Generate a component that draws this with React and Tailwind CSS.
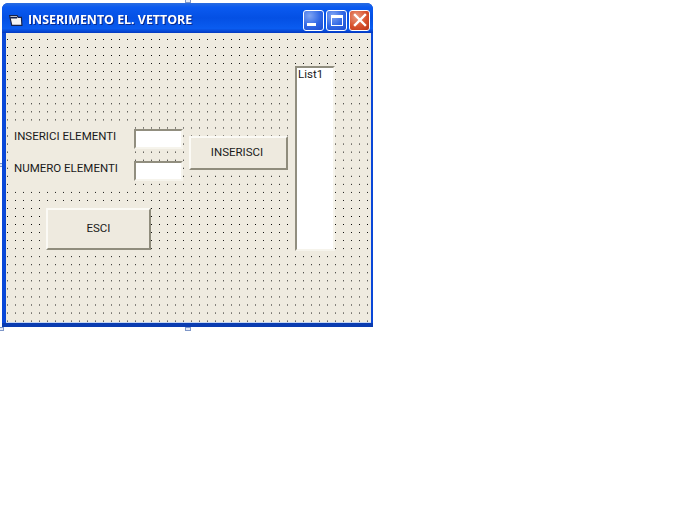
function Handle({ className }) {
  return <div className={`absolute w-[6px] h-[4px] bg-[#e4eaf6] border border-[#7f97c8] ${className}`} />;
}

function TitleBtn({ red, children }) {
  return (
    <div
      className={`w-[21px] h-[21px] rounded-[3px] border border-white flex items-center justify-center ${
        red
          ? "bg-[radial-gradient(circle_at_35%_30%,#ea9c82,#d8512c_55%,#b8341a)]"
          : "bg-[radial-gradient(circle_at_30%_25%,#7fa4f4,#2f66e4_55%,#1c4cd0)]"
      }`}
    >
      {children}
    </div>
  );
}

function Sunken({ className, children }) {
  return (
    <div className={`bg-white border-2 border-t-[#918e7f] border-l-[#918e7f] border-r-[#f6f4ec] border-b-[#f6f4ec] ${className}`}>
      {children}
    </div>
  );
}

function Btn({ className, children }) {
  return (
    <div className={`flex items-center justify-center bg-[#eeeadf] border-t-2 border-l-2 border-r-[2px] border-b-[2px] border-t-[#fbfaf5] border-l-[#fbfaf5] border-r-[#8f8c7c] border-b-[#8f8c7c] ${className}`}>
      {children}
    </div>
  );
}

export default function App() {
  return (
    <div className="relative w-[700px] h-[525px] bg-white overflow-hidden font-['Roboto',sans-serif]">
      <Handle className="left-[185px] top-[-1px]" />
      <Handle className="left-[-1px] top-[163px]" />
      <Handle className="left-[185px] top-[327px]" />
      <Handle className="left-[-2px] top-[327px]" />
      <div className="absolute left-[2px] top-[3px] w-[371px] h-[324px] flex flex-col rounded-t-[6px] overflow-hidden bg-[#0a48d8] shadow-[inset_0_-4px_0_#0a3cb0]">
        <div className="h-[30px] shrink-0 flex items-center pt-[4px] pl-[6px] pr-[3px] bg-[linear-gradient(180deg,#2a6ce0_0%,#0a5af0_14%,#0450e4_50%,#0a5cf0_85%,#0438c0_100%)]">
          <svg width="15" height="15" viewBox="0 0 14 14" className="shrink-0">
            <path d="M1.5 2.5h7l1 1.5h3l.5 7.5H3.5z" fill="#f4f4f4" stroke="#16224a" strokeWidth="1.1" />
            <path d="M2 4.5h6.5" stroke="#16224a" strokeWidth="1.4" />
          </svg>
          <span className="ml-[5px] text-white text-[12.4px] font-bold whitespace-nowrap font-['Open_Sans',sans-serif] drop-shadow-[1px_1px_0_#0a2a90]">
            INSERIMENTO EL. VETTORE
          </span>
          <div className="ml-auto flex gap-[2px]">
            <TitleBtn>
              <div className="w-[9px] h-[3px] bg-white mt-[9px] mr-[5px]" />
            </TitleBtn>
            <TitleBtn>
              <div className="w-[12px] h-[11px] border border-white border-t-[3px]" />
            </TitleBtn>
            <TitleBtn red>
              <svg width="14" height="14" viewBox="0 0 14 14">
                <path d="M2 2l10 10M12 2L2 12" stroke="#fff" strokeWidth="2.4" strokeLinecap="square" />
              </svg>
            </TitleBtn>
          </div>
        </div>
        <div className="ml-[4px] mr-[2px] mb-[4px] flex-1 flex items-start pl-[6px] pt-[33px] bg-[#efebe0] bg-[radial-gradient(circle_at_0.5px_0.5px,#000_0.5px,transparent_0.5px)] bg-[size:8px_8.06px] bg-[position:1px_6px] border-b border-b-[#c4d6f4] text-[11.5px] text-[#1a1a1a]">
          <div className="w-[283px] flex flex-col pt-[56px]">
            <div className="flex items-start">
              <div className="w-[118px] h-[63px] pl-[2px] pt-[7px] flex flex-col gap-[18px] bg-[#efebe0] leading-[14px] whitespace-nowrap">
                <div>INSERICI ELEMENTI</div>
                <div>NUMERO ELEMENTI</div>
              </div>
              <div className="ml-[4px] pt-[7px] flex flex-col gap-[12px]">
                <Sunken className="w-[49px] h-[20px]" />
                <Sunken className="w-[49px] h-[20px]" />
              </div>
              <Btn className="ml-[6px] mt-[14px] w-[99px] h-[34px] pr-[3px]">INSERISCI</Btn>
            </div>
            <Btn className="ml-[34px] mt-[23px] w-[105px] h-[42px]">ESCI</Btn>
          </div>
          <Sunken className="w-[40px] h-[185px]">
            <div className="pl-[1px] leading-[13px]">List1</div>
          </Sunken>
        </div>
      </div>
    </div>
  );
}
